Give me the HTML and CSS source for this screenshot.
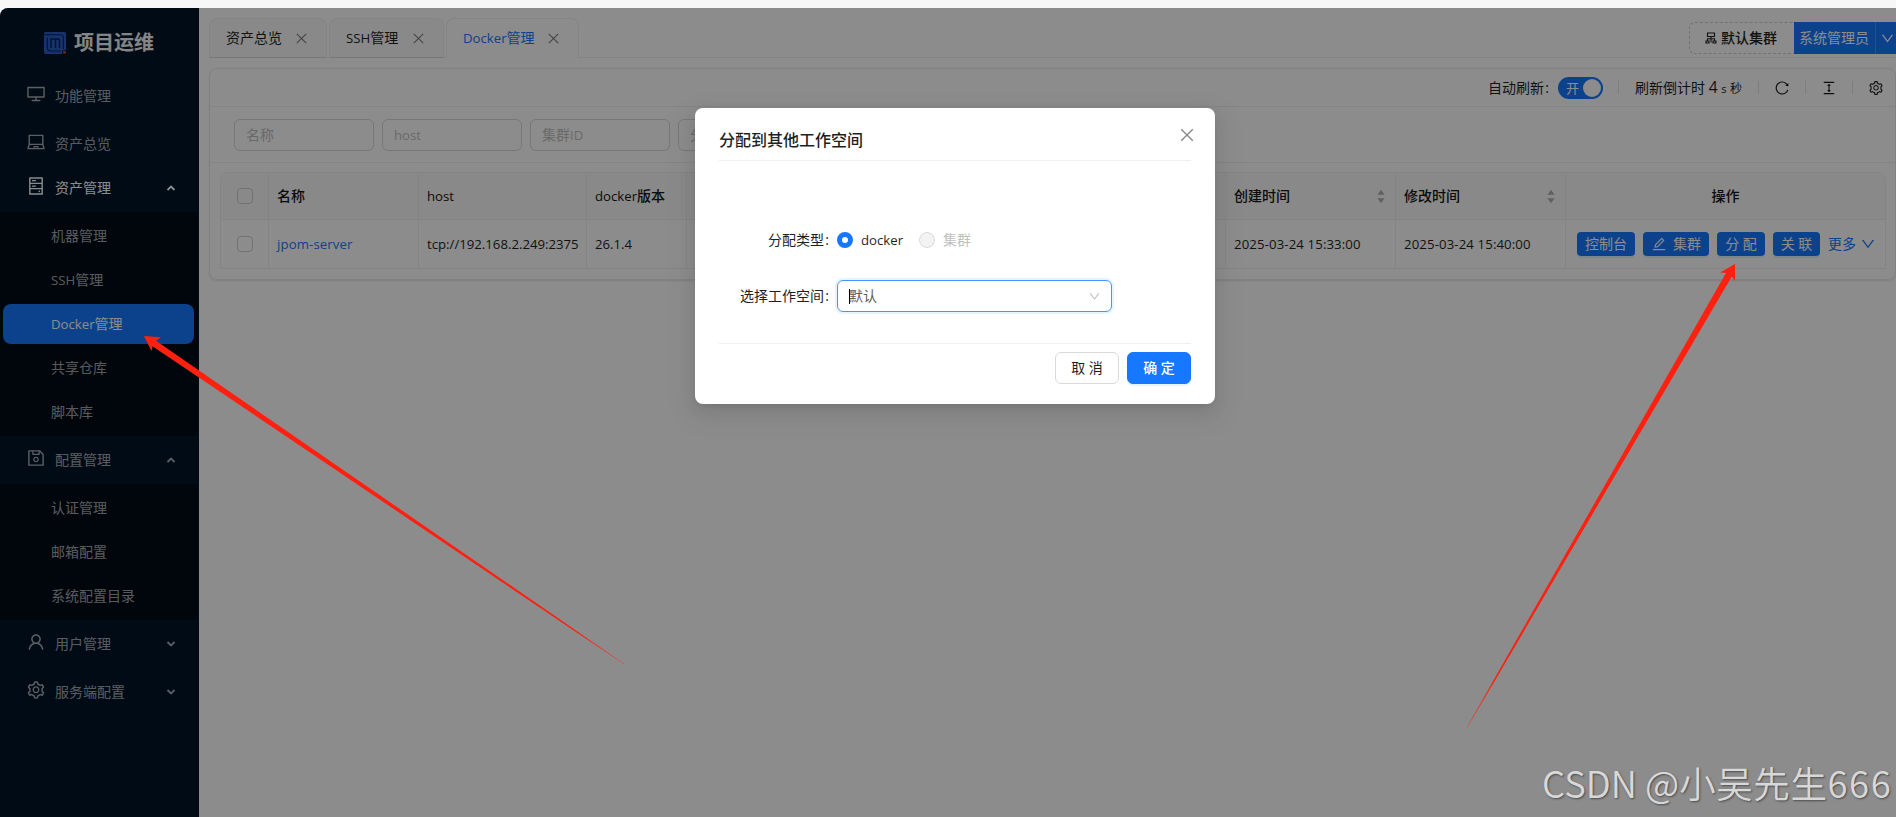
FILE: index.html
```html
<!DOCTYPE html>
<html lang="zh-CN">
<head>
<meta charset="utf-8">
<title>Docker管理</title>
<link rel="stylesheet" href="styles.css">
</head>
<body>
<svg class="defs" width="0" height="0">
  <symbol id="i-desktop" viewBox="0 0 1024 1024"><path d="M928 140H96c-17.7 0-32 14.3-32 32v496c0 17.7 14.3 32 32 32h380v112H304c-8.8 0-16 7.2-16 16v48c0 4.400 3.600 8 8 8h432c4.400 0 8-3.600 8-8v-48c0-8.800-7.200-16-16-16H548V700h380c17.700 0 32-14.300 32-32V172c0-17.700-14.300-32-32-32zm-40 488H136V212h752v416z"/></symbol>
  <symbol id="i-laptop" viewBox="0 0 1024 1024"><path d="M956.9 845.1L896.4 632V168c0-17.700-14.300-32-32-32h-704c-17.700 0-32 14.300-32 32v464L67.900 845.100C60.400 866 75.800 888 98 888h828.800c22.200 0 37.600-22 30.100-42.900zM200.400 208h624v395h-624V208zm228.300 608l8.100-37h150.300l8.100 37H428.700zm224 0l-19.100-86.700c-.8-3.700-4.100-6.300-7.800-6.300H398.200c-3.800 0-7 2.600-7.800 6.300L371.300 816H151l42.300-149h638.200l42.300 149H652.700z"/></symbol>
  <symbol id="i-hdd" viewBox="0 0 1024 1024"><path d="M832 64H192c-17.700 0-32 14.300-32 32v832c0 17.700 14.300 32 32 32h640c17.700 0 32-14.300 32-32V96c0-17.700-14.300-32-32-32zm-600 72h560v208H232V136zm560 480H232V408h560v208zm0 272H232V680h560v208zM496 208H312c-4.400 0-8 3.600-8 8v48c0 4.400 3.600 8 8 8h184c4.400 0 8-3.600 8-8v-48c0-4.400-3.600-8-8-8zM312 544h184c4.400 0 8-3.600 8-8v-48c0-4.400-3.600-8-8-8H312c-4.400 0-8 3.600-8 8v48c0 4.400 3.600 8 8 8zm328 244a40 40 0 1080 0 40 40 0 10-80 0z"/></symbol>
  <symbol id="i-save" viewBox="0 0 1024 1024"><path d="M893.300 293.300L730.700 130.700c-7.500-7.500-16.700-13-26.700-16V112H144c-17.700 0-32 14.300-32 32v736c0 17.700 14.300 32 32 32h736c17.700 0 32-14.300 32-32V338.500c0-17-6.700-33.200-18.700-45.200zM384 184h256v104H384V184zm456 656H184V184h136v136c0 17.700 14.300 32 32 32h320c17.700 0 32-14.300 32-32V205.800l136 136V840zM512 442c-79.500 0-144 64.500-144 144s64.500 144 144 144 144-64.500 144-144-64.500-144-144-144zm0 224c-44.200 0-80-35.800-80-80s35.800-80 80-80 80 35.800 80 80-35.800 80-80 80z"/></symbol>
  <symbol id="i-user" viewBox="0 0 1024 1024"><path d="M858.500 763.600a374 374 0 00-80.600-119.500 375.630 375.630 0 00-119.500-80.600c-.4-.2-.8-.3-1.200-.5C719.500 518 760 444.700 760 362c0-137-111-248-248-248S264 225 264 362c0 82.700 40.500 156 102.800 201.100-.4.2-.8.3-1.200.5-44.800 18.900-85 46-119.500 80.600a375.630 375.630 0 00-80.600 119.500A371.700 371.700 0 00136 901.800a8 8 0 008 8.200h60c4.400 0 7.900-3.500 8-7.800 2-77.200 33-149.500 87.800-204.300 56.700-56.700 132-87.900 212.200-87.900s155.500 31.200 212.200 87.900C779 752.700 810 825 812 902.200c.1 4.400 3.600 7.800 8 7.800h60a8 8 0 008-8.200c-1-47.800-10.900-94.300-29.500-138.200zM512 534c-45.900 0-89.100-17.900-121.600-50.400S340 407.900 340 362c0-45.900 17.900-89.100 50.400-121.600S466.100 190 512 190s89.100 17.900 121.600 50.400S684 316.100 684 362c0 45.900-17.900 89.100-50.400 121.600S557.900 534 512 534z"/></symbol>
  <symbol id="i-setting" viewBox="0 0 1024 1024"><path d="M924.8 625.7l-65.5-56c3.1-19 4.7-38.4 4.7-57.8s-1.600-38.800-4.700-57.800l65.500-56a32.030 32.030 0 009.300-35.200l-.9-2.600a443.740 443.740 0 00-79.700-137.900l-1.800-2.100a32.120 32.120 0 00-35.100-9.500l-81.300 28.900c-30-24.600-63.500-44-99.700-57.600l-15.700-85a32.050 32.050 0 00-25.800-25.700l-2.700-.5c-52.100-9.400-106.900-9.400-159 0l-2.700.5a32.050 32.050 0 00-25.800 25.700l-15.800 85.400a351.860 351.860 0 00-99 57.400l-81.900-29.100a32 32 0 00-35.100 9.500l-1.800 2.100a446.020 446.020 0 00-79.700 137.900l-.9 2.600c-4.500 12.500-.8 26.500 9.300 35.200l66.300 56.600c-3.100 18.800-4.600 38-4.600 57.100 0 19.200 1.500 38.400 4.600 57.100L99 625.500a32.030 32.030 0 00-9.300 35.200l.9 2.600c18.100 50.400 44.900 96.900 79.700 137.900l1.800 2.100a32.120 32.120 0 0035.100 9.500l81.900-29.100c29.800 24.500 63.100 43.900 99 57.400l15.800 85.400a32.050 32.050 0 0025.800 25.700l2.700.5a449.400 449.400 0 00159 0l2.700-.5a32.050 32.050 0 0025.800-25.700l15.700-85a350 350 0 0099.700-57.600l81.300 28.900a32 32 0 0035.100-9.500l1.800-2.100c34.800-41.100 61.600-87.500 79.700-137.900l.9-2.600c4.500-12.300.8-26.300-9.300-35zM788.300 465.900c2.500 15.100 3.800 30.600 3.800 46.100s-1.300 31-3.800 46.100l-6.600 40.100 74.700 63.900a370.030 370.030 0 01-42.600 73.600L721 702.800l-31.400 25.800c-23.900 19.600-50.500 35-79.300 45.800l-38.100 14.300-17.900 97a377.500 377.500 0 01-85 0l-17.900-97.200-37.800-14.500c-28.500-10.800-55-26.200-78.700-45.700l-31.400-25.900-93.400 33.200c-17-22.900-31.200-47.600-42.600-73.600l75.500-64.500-6.500-40c-2.400-14.900-3.700-30.300-3.700-45.500 0-15.300 1.200-30.600 3.700-45.500l6.500-40-75.500-64.500c11.300-26.100 25.600-50.700 42.600-73.600l93.400 33.200 31.400-25.900c23.700-19.500 50.200-34.900 78.700-45.700l37.900-14.300 17.900-97.200c28.100-3.200 56.800-3.200 85 0l17.900 97 38.100 14.300c28.700 10.800 55.400 26.200 79.300 45.800l31.400 25.800 92.800-32.900c17 22.900 31.200 47.600 42.600 73.600L781.800 426l6.500 39.900zM512 326c-97.200 0-176 78.800-176 176s78.800 176 176 176 176-78.800 176-176-78.800-176-176-176zm79.200 255.200A111.600 111.600 0 01512 614c-29.900 0-58-11.700-79.200-32.800A111.600 111.600 0 01400 502c0-29.900 11.700-58 32.800-79.200C454 401.600 482.100 390 512 390c29.900 0 58 11.600 79.200 32.800A111.600 111.600 0 01624 502c0 29.900-11.700 58-32.800 79.200z"/></symbol>
  <symbol id="i-reload" viewBox="0 0 1024 1024"><path d="M909.100 209.300l-56.400 44.100C775.800 155.100 656.200 92 521.900 92 290 92 102.300 279.500 102 511.500 101.700 743.700 289.800 932 521.900 932c181.300 0 335.800-115 394.600-276.100 1.500-4.200-.7-8.900-4.900-10.300l-56.700-19.500a8 8 0 00-10.100 4.800c-1.800 5-3.800 10-5.900 14.900-17.300 41-42.100 77.800-73.700 109.400A344.770 344.770 0 01655.900 829c-42.300 17.900-87.400 27-133.800 27-46.500 0-91.500-9.100-133.800-27A341.500 341.500 0 01279 755.200a342.160 342.160 0 01-73.700-109.400c-17.900-42.400-27-87.400-27-133.900s9.100-91.500 27-133.900c17.300-41 42.100-77.800 73.700-109.400 31.600-31.600 68.400-56.400 109.300-73.800 42.300-17.900 87.400-27 133.800-27 46.500 0 91.500 9.100 133.800 27a341.500 341.500 0 01109.300 73.800c9.900 9.900 19.200 20.400 27.800 31.400l-60.200 47a8 8 0 003 14.100l175.600 43c5 1.200 9.900-2.600 9.900-7.700l.8-180.900c-.1-6.600-7.800-10.300-13-6.200z"/></symbol>
  <symbol id="i-height" viewBox="0 0 1024 1024"><path d="M840 836H184c-4.400 0-8 3.600-8 8v60c0 4.400 3.600 8 8 8h656c4.400 0 8-3.600 8-8v-60c0-4.400-3.600-8-8-8zm0-724H184c-4.400 0-8 3.600-8 8v60c0 4.400 3.600 8 8 8h656c4.400 0 8-3.600 8-8v-60c0-4.400-3.600-8-8-8zM610.800 378c6 0 9.400-7 5.700-11.700L515.700 238.700a7.140 7.140 0 00-11.300 0L403.600 366.300a7.230 7.230 0 005.700 11.700H476v268h-62.800c-6 0-9.400 7-5.700 11.700l100.800 127.500c2.900 3.700 8.500 3.700 11.300 0l100.800-127.500c3.700-4.700.4-11.700-5.700-11.700H548V378h62.800z"/></symbol>
  <symbol id="i-edit" viewBox="0 0 1024 1024"><path d="M257.700 752c2 0 4-.2 6-.5L431.900 722c2-.4 3.900-1.300 5.300-2.800l423.900-423.900a9.960 9.960 0 000-14.100L694.900 114.900c-1.900-1.900-4.400-2.900-7.100-2.900s-5.200 1-7.100 2.900L256.800 538.800c-1.500 1.500-2.400 3.300-2.800 5.300l-29.500 168.200a33.500 33.500 0 009.400 29.800c6.600 6.400 14.900 9.900 23.800 9.900zm67.400-174.400L687.800 215l73.300 73.300-362.700 362.600-88.900 15.700 15.600-89zM880 836H144c-17.700 0-32 14.300-32 32v36c0 4.400 3.600 8 8 8h784c4.400 0 8-3.600 8-8v-36c0-17.700-14.300-32-32-32z"/></symbol>
  <symbol id="i-down" viewBox="0 0 1024 1024"><path d="M884 256h-75c-5.100 0-9.900 2.500-12.900 6.600L512 654.200 227.900 262.600c-3-4.100-7.800-6.600-12.900-6.600h-75c-6.500 0-10.300 7.400-6.500 12.700l352.600 486.100c12.800 17.600 39 17.600 51.700 0l352.600-486.100c3.900-5.300.1-12.700-6.400-12.700z"/></symbol>
  <symbol id="i-close" viewBox="0 0 16 16"><path d="M2.200 2.200 13.800 13.800M13.800 2.200 2.200 13.800" fill="none" stroke="currentColor" stroke-width="1.300"/></symbol>
  <symbol id="i-cluster" viewBox="0 0 12 12"><path d="M2.500 1h7v3.500h-7zM6 4.500v2.300M2.500 9V6.800h7V9M1 9h3v2H1zM8 9h3v2H8zM6 7v3.500" fill="none" stroke="currentColor" stroke-width="1.100"/></symbol>
  <symbol id="i-arrow" viewBox="0 0 10 10"><path d="M1.500 7 5 3.500 8.500 7" fill="none" stroke="currentColor" stroke-width="1.800"/></symbol>
</svg>

<div class="app">
  <aside class="sider">
    <div class="logo">
      <svg width="22" height="22" viewBox="0 0 22 22"><rect width="22" height="22" rx="1.500" fill="#2b62d0"/><path d="M0 2.700h16.500q2.800 0 2.800 2.800V17M3.300 5.500v10q0 3.500 3.500 3.500H17" fill="none" stroke="#0d2463" stroke-width="1.100"/><path d="M7 16V7h3.200q1.300 0 1.300 1.300V16M11.500 7H14q1.500 0 1.500 1.500V16" fill="none" stroke="#0b1f52" stroke-width="1.300"/><circle cx="20.300" cy="20.300" r="2.200" fill="#001529"/><circle cx="20.400" cy="20.300" r="1.400" fill="#e05a1c"/></svg>
      <b>项目运维</b>
    </div>
    <div class="item first"><svg class="ico"><use href="#i-desktop"/></svg><span>功能管理</span></div>
    <div class="item"><svg class="ico"><use href="#i-laptop"/></svg><span>资产总览</span></div>
    <div class="item title open"><svg class="ico"><use href="#i-hdd"/></svg><span>资产管理</span><svg class="chev"><use href="#i-arrow"/></svg></div>
    <div class="sub">
      <div class="leaf">机器管理</div>
      <div class="leaf"><span class="en">SSH</span>管理</div>
      <div class="leaf sel"><span class="en">Docker</span>管理</div>
      <div class="leaf">共享仓库</div>
      <div class="leaf">脚本库</div>
    </div>
    <div class="item title"><svg class="ico"><use href="#i-save"/></svg><span>配置管理</span><svg class="chev"><use href="#i-arrow"/></svg></div>
    <div class="sub">
      <div class="leaf">认证管理</div>
      <div class="leaf">邮箱配置</div>
      <div class="leaf">系统配置目录</div>
    </div>
    <div class="item title"><svg class="ico"><use href="#i-user"/></svg><span>用户管理</span><svg class="chev flip"><use href="#i-arrow"/></svg></div>
    <div class="item title"><svg class="ico"><use href="#i-setting"/></svg><span>服务端配置</span><svg class="chev flip"><use href="#i-arrow"/></svg></div>
  </aside>

  <main class="main">
    <header class="top">
      <nav class="tabs">
        <div class="tab t1"><span>资产总览</span><svg><use href="#i-close"/></svg></div>
        <div class="tab t2"><span><i class="en">SSH</i>管理</span><svg><use href="#i-close"/></svg></div>
        <div class="tab t3 active"><span><i class="en">Docker</i>管理</span><svg><use href="#i-close"/></svg></div>
      </nav>
      <div class="group">
        <div class="cluster"><svg width="12" height="12"><use href="#i-cluster"/></svg><b>默认集群</b></div>
        <div class="admin">系统管理员</div>
        <div class="more"><svg width="15" height="15"><use href="#i-down"/></svg></div>
      </div>
    </header>

    <section class="card">
      <div class="bar">
        <span>自动刷新<i class="colon">:</i></span>
        <div class="switch">开<i></i></div>
        <em></em>
        <span class="count">刷新倒计时 <i class="n">4</i> <i class="s">s</i> <i class="u">秒</i></span>
        <em></em><svg><use href="#i-reload"/></svg>
        <em></em><svg><use href="#i-height"/></svg>
        <em></em><svg><use href="#i-setting"/></svg>
      </div>
      <div class="filters">
        <div class="input">名称</div>
        <div class="input"><span class="en">host</span></div>
        <div class="input">集群<span class="en">ID</span></div>
        <div class="input">分组</div>
      </div>
      <div class="table">
        <div class="row head">
          <div class="c chk"><i></i></div>
          <div class="c">名称</div>
          <div class="c"><span class="en">host</span></div>
          <div class="c"><span class="en">docker</span>版本</div>
          <div class="c"></div>
          <div class="c sort">创建时间<svg viewBox="0 0 10 18"><path d="M5 1 9.300 7H.7zM5 17 .7 11h8.600z"/></svg></div>
          <div class="c sort">修改时间<svg viewBox="0 0 10 18"><path d="M5 1 9.300 7H.7zM5 17 .7 11h8.600z"/></svg></div>
          <div class="c mid">操作</div>
        </div>
        <div class="row">
          <div class="c chk"><i></i></div>
          <div class="c link"><span class="en wide">jpom-server</span></div>
          <div class="c"><span class="en">tcp://192.168.2.249:2375</span></div>
          <div class="c"><span class="en">26.1.4</span></div>
          <div class="c"></div>
          <div class="c"><span class="en wide">2025-03-24 15:33:00</span></div>
          <div class="c"><span class="en wide">2025-03-24 15:40:00</span></div>
          <div class="c ops">
            <span class="btn b1">控制台</span>
            <span class="btn b2"><svg width="16" height="16"><use href="#i-edit"/></svg>集群</span>
            <span class="btn b3">分 配</span>
            <span class="btn b4">关 联</span>
            <span class="link more-link">更多<svg width="16" height="16"><use href="#i-down"/></svg></span>
          </div>
        </div>
      </div>
    </section>
  </main>
  <div class="mask"></div>
</div>

<div class="modal">
  <svg class="x"><use href="#i-close"/></svg>
  <h1>分配到其他工作空间</h1>
  <div class="form">
    <div class="field">
      <label>分配类型<i class="colon">:</i></label>
      <span class="radio on"></span><span class="rt en">docker</span>
      <span class="radio off"></span><span class="rt dis">集群</span>
    </div>
    <div class="field">
      <label>选择工作空间<i class="colon">:</i></label>
      <div class="select"><i class="caret"></i><span>默认</span><svg width="13" height="13"><use href="#i-down"/></svg></div>
    </div>
  </div>
  <div class="foot"><button class="cancel">取 消</button><button class="ok">确 定</button></div>
</div>

<svg class="arrows" width="1896" height="817" viewBox="0 0 1896 817">
  <defs>
    <linearGradient id="g1" gradientUnits="userSpaceOnUse" x1="144" y1="336" x2="624" y2="664"><stop offset=".9" stop-color="#ff2010"/><stop offset="1" stop-color="#ff2010" stop-opacity=".4"/></linearGradient>
    <linearGradient id="g2" gradientUnits="userSpaceOnUse" x1="1735" y1="264" x2="1467" y2="727"><stop offset=".9" stop-color="#ff2010"/><stop offset="1" stop-color="#ff2010" stop-opacity=".4"/></linearGradient>
  </defs>
  <path fill="url(#g1)" d="M144 336 161 337.300 156 340.800 624.200 663.700 623.800 664.300 152.500 346.200 151.500 351z"/>
  <path fill="url(#g2)" d="M1735 264 1720 272.500 1726 273 1466.500 727.500 1467.200 728 1731.800 276.500 1735 281z"/>
</svg>
<div class="watermark">CSDN @<span class="cn">小吴先生</span><span class="num">666</span></div>
</body>
</html>
```

FILE: styles.css
```css
* { box-sizing: border-box; }
html, body { margin: 0; width: 1896px; height: 817px; overflow: hidden; }
body {
  background: #f7f7f7; padding-top: 8px; position: relative;
  font: 14px/22px "Open Sans", "Noto Sans CJK SC", sans-serif; color: #1f1f1f;
}
i, em { font-style: normal; }
svg { fill: currentColor; flex: none; }
.defs { position: absolute; }
.en { font-size: 13.2px; }
.wide { letter-spacing: .12px; }
.colon { display: inline-block; width: 6px; text-align: center; }

.app { position: relative; display: flex; height: 809px; background: #fff; border-radius: 8px 0 0 0; overflow: hidden; }
.mask { position: absolute; inset: 0; background: rgba(0,0,0,.45); }

/* side menu */
.sider { flex: none; width: 199px; background: #001529; color: rgba(255,255,255,.65); }
.logo { display: flex; align-items: center; gap: 8px; padding-left: 44px; height: 64px; margin-top: 3px; color: #fff; opacity: .95; }
.logo b { font-size: 20px; line-height: 30px; }
.item { display: flex; align-items: center; height: 48px; padding-left: 26px; position: relative; }
.item.first { margin-top: -3px; }
.item .ico { width: 20px; height: 20px; margin: -4px 9px 0 0; }
.item.open { height: 40px; margin-bottom: 4px; color: #fff; }
.item .chev { width: 10px; height: 10px; margin-left: auto; margin-right: 23px; }
.item .chev.flip { transform: rotate(180deg); }
.sub { background: #000c17; width: 198px; padding: 4px; display: flex; flex-direction: column; gap: 4px; }
.leaf { height: 40px; line-height: 40px; padding-left: 48px; margin-left: -1px; border-radius: 8px; }
.leaf.sel { background: #1677ff; color: #fff; }

/* tab strip */
.main { flex: none; width: 1697px; padding: 10px 0 0 10px; }
.top { display: flex; justify-content: space-between; height: 40px; border-bottom: 1px solid #f0f0f0; }
.tabs { display: flex; gap: 2px; height: 40px; }
.tab { display: flex; align-items: center; border: 1px solid #f0f0f0; border-bottom-color: #d9d9d9; border-radius: 8px 8px 0 0; background: #fafafa; padding-left: 16px; }
.tab span { flex: 1; }
.tab svg { width: 13px; height: 13px; color: #7b7b7b; margin-right: 18px; }
.t1 { width: 118px; }
.t2 { width: 115px; }
.t3 { width: 133px; }
.tab.active { background: #fff; color: #1677ff; border-bottom-color: #fff; }
.group { display: flex; height: 32px; margin: 4px -14px 0 0; }
.cluster { width: 105px; border: 1px dashed #d0d0d0; border-right: 0; border-radius: 6px 0 0 6px; display: flex; align-items: center; gap: 4px; padding-left: 15px; }
.cluster b { font-weight: 500; }
.admin { background: #1677ff; color: #fff; width: 81px; line-height: 31px; padding-left: 5px; }
.more { background: #1677ff; color: #fff; width: 35px; border-left: 1px solid #4592ff; display: flex; align-items: center; padding-left: 4px; }

/* content card */
.card { margin-top: 10px; width: 1687px; height: 212px; border: 1px solid #ececec; border-radius: 8px; box-shadow: 0 1px 2px rgba(0,0,0,.1); }
.bar { height: 38px; border-bottom: 1px solid #f0f0f0; display: flex; align-items: center; padding-left: 1278px; }
.bar em { width: 1px; height: 13px; background: #e6e6e6; margin: 0 15px; }
.bar svg { width: 16px; height: 16px; }
.switch { width: 45px; height: 22px; border-radius: 11px; background: #1677ff; color: #fff; margin-left: 8px; padding: 0 2px 0 8px; display: flex; align-items: center; justify-content: space-between; font-size: 13px; }
.switch i { width: 18px; height: 18px; border-radius: 50%; background: #fff; }
.count { width: 109px; white-space: nowrap; line-height: 22px; padding-left: 1px; }
.count .n { font-size: 15.500px; }
.count .s { font-size: 11px; }
.count .u { font-size: 12px; }
.filters { height: 56px; border-bottom: 1px solid #f0f0f0; display: flex; align-items: center; gap: 8px; padding-left: 24px; }
.input { width: 140px; height: 32px; border: 1px solid #d9d9d9; border-radius: 6px; line-height: 30px; padding-left: 11px; color: #bfbfbf; }
.table { margin: 9px 0 0 10px; width: 1666px; border: 1px solid #f0f0f0; border-radius: 8px 8px 0 0; overflow: hidden; }
.row { display: grid; grid-template-columns: 48px 150px 168px 100px 539px 170px 170px 1fr; height: 48px; }
.row.head { height: 47px; background: #fafafa; border-bottom: 1px solid #f0f0f0; font-weight: 500; color: #141414; }
.c { display: flex; align-items: center; padding-left: 8px; border-right: 1px solid #f0f0f0; white-space: nowrap; }
.c:last-child { border-right: 0; }
.chk i { width: 16px; height: 16px; border: 1px solid #d0d0d0; border-radius: 4px; margin-left: 8px; }
.sort { justify-content: space-between; padding-right: 9px; }
.sort svg { width: 10px; height: 15px; color: #b0b0b0; }
.mid { justify-content: center; padding: 0; }
.link { color: #1677ff; }
.ops { gap: 8px; padding-left: 11px; }
.btn { height: 24px; line-height: 24px; border-radius: 4px; background: #1677ff; color: #fff; display: flex; align-items: center; justify-content: center; box-shadow: 0 2px 0 rgba(5,145,255,.12); }
.b1 { width: 58px; }
.b2 { width: 66px; gap: 6px; }
.b3 { width: 48px; }
.b4 { width: 47px; }
.more-link { display: flex; align-items: center; gap: 4px; }

/* dialog */
.modal { position: absolute; left: 695px; top: 108px; width: 520px; height: 296px; background: #fff; border-radius: 8px; padding: 20px 24px; box-shadow: 0 6px 16px rgba(0,0,0,.08), 0 3px 6px -4px rgba(0,0,0,.12), 0 9px 28px 8px rgba(0,0,0,.05); }
.modal h1 { margin: 0; height: 33px; font-size: 16px; line-height: 24px; font-weight: 500; border-bottom: 1px solid #f0f0f0; }
.modal .x { position: absolute; right: 20px; top: 19px; width: 16px; height: 16px; color: #858585; }
.form { height: 183px; border-bottom: 1px solid #f0f0f0; padding-top: 63px; display: flex; flex-direction: column; gap: 24px; }
.field { display: flex; align-items: center; height: 32px; }
.field label { width: 111px; margin-right: 7px; text-align: right; }
.radio { width: 16px; height: 16px; border-radius: 50%; }
.radio.on { border: 5px solid #1677ff; }
.radio.off { border: 1px solid #d9d9d9; background: #f3f3f3; }
.rt { margin: 0 16px 0 8px; }
.rt.dis { color: #bfbfbf; }
.select { position: relative; width: 275px; height: 32px; border: 1px solid #4096ff; border-radius: 6px; box-shadow: 0 0 0 2px rgba(5,145,255,.1); display: flex; align-items: center; justify-content: space-between; padding: 0 10px 0 11px; color: #5c5c5c; }
.select svg { color: #bfbfbf; }
.caret { position: absolute; left: 11px; top: 8px; width: 1px; height: 15px; background: #000; }
.foot { display: flex; justify-content: flex-end; gap: 8px; padding-top: 8px; }
.foot button { width: 64px; height: 32px; padding: 0; border-radius: 6px; font: inherit; border: 1px solid #d9d9d9; background: #fff; color: #1f1f1f; }
.foot .ok { background: #1677ff; border-color: #1677ff; color: #fff; font-weight: 500; box-shadow: 0 2px 0 rgba(5,145,255,.1); }

.arrows { position: absolute; left: 0; top: 0; }
.watermark { position: absolute; left: 1542px; top: 757px; font: 350 36.500px/52px "Noto Sans CJK SC", sans-serif; color: #d8d8d8; text-shadow: 1px 1px 2px rgba(60,60,60,.8); white-space: nowrap; }
.watermark .cn { letter-spacing: .6px; }
.watermark .num { letter-spacing: 1.500px; }
```
